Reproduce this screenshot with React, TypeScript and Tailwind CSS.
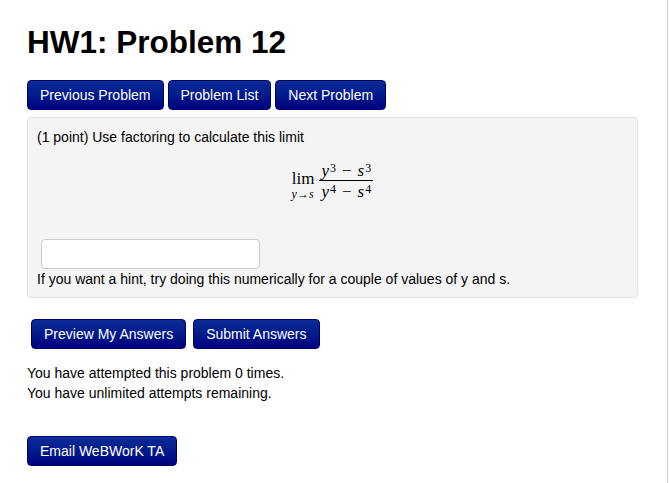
const btn =
  "h-[30px] px-3 rounded-[4px] border border-[#00006a] bg-gradient-to-b from-[#0c2b96] to-[#00007f] text-white text-[14px] leading-none whitespace-nowrap";

function Sup({ children }: { children: React.ReactNode }) {
  return <sup className="text-[12px] not-italic relative -top-[4px] ml-[1px]">{children}</sup>;
}

function Limit() {
  return (
    <div className="flex justify-center items-center h-[49px] mt-[9px] font-['Liberation_Serif',serif] text-black">
      <div className="flex flex-col items-center mt-[10px]">
        <span className="text-[17px] leading-[14px]">lim</span>
        <span className="text-[12px] italic leading-[11px] mt-[3px] -ml-[1px]">
          y<span className="not-italic">→</span>s
        </span>
      </div>
      <div className="flex flex-col items-center ml-[5px]">
        <span className="text-[17px] italic leading-[17px] px-[2px] pb-[1px]">
          y<Sup>3</Sup>
          <span className="not-italic mx-[6px]">−</span>s<Sup>3</Sup>
        </span>
        <span className="text-[17px] italic leading-[17px] px-[2px] pt-[2px] border-t border-black">
          y<Sup>4</Sup>
          <span className="not-italic mx-[6px]">−</span>s<Sup>4</Sup>
        </span>
      </div>
    </div>
  );
}

export default function App() {
  return (
    <div className="w-[668px] min-h-[483px] border-r border-[#cfcfcf] bg-white pl-[27px] pt-[23px] font-['Liberation_Sans',Arial,sans-serif] text-black">
      <h1 className="text-[31.5px] leading-[38px] font-bold">HW1: Problem 12</h1>

      <div className="flex gap-1 mt-[19px]">
        <button className={btn}>Previous Problem</button>
        <button className={btn}>Problem List</button>
        <button className={btn}>Next Problem</button>
      </div>

      <div className="w-[611px] mt-[7px] bg-[#f4f4f4] border border-[#e2e2e2] rounded-[4px] px-[9px] pt-[9px] pb-[8px] text-[14px] leading-[20px]">
        <p>(1 point) Use factoring to calculate this limit</p>
        <Limit />
        <input
          type="text"
          className="block mt-[34px] ml-1 w-[219px] h-[30px] bg-white border border-[#cccccc] rounded-[4px]"
        />
        <p>If you want a hint, try doing this numerically for a couple of values of y and s.</p>
      </div>

      <div className="flex gap-[7px] mt-[21px] ml-1">
        <button className={btn}>Preview My Answers</button>
        <button className={btn}>Submit Answers</button>
      </div>

      <div className="mt-[14px] text-[14px] leading-[20px]">
        <p>You have attempted this problem 0 times.</p>
        <p>You have unlimited attempts remaining.</p>
      </div>

      <button className={`${btn} mt-[33px]`}>Email WeBWorK TA</button>
    </div>
  );
}
